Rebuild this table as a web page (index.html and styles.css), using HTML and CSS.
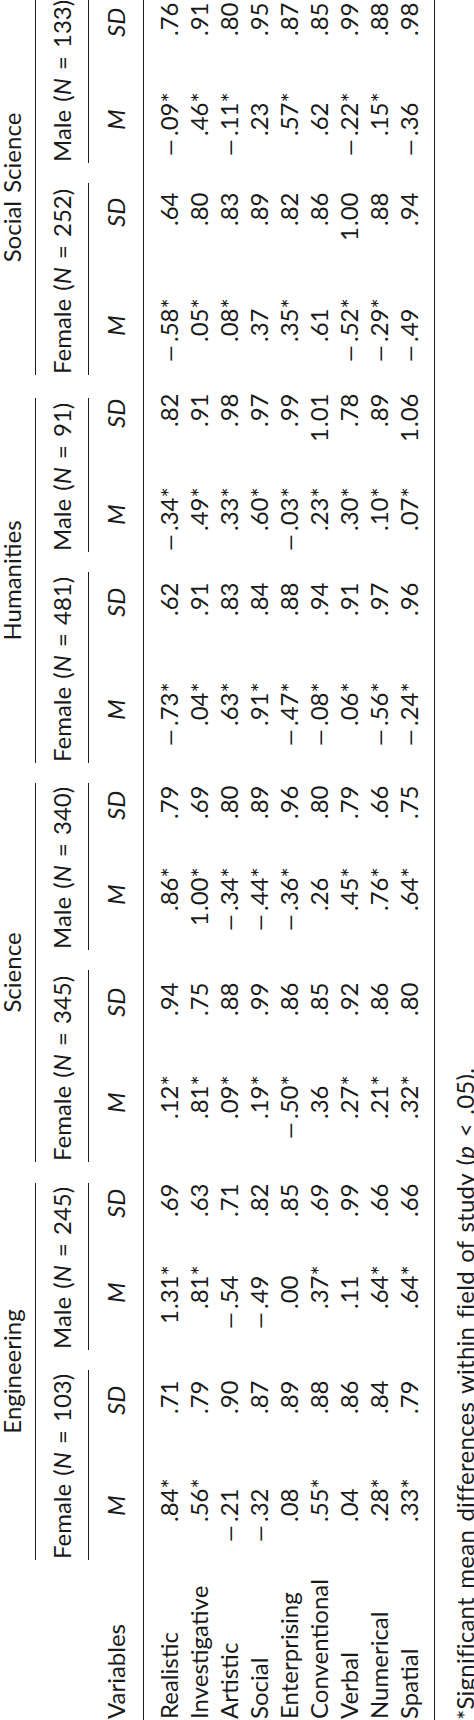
FILE: index.html
```html
<!DOCTYPE html>
<html lang="en">
<head>
<meta charset="utf-8">
<title>Table</title>
<link rel="stylesheet" href="styles.css">
</head>
<body>
<div class="page">
  <div class="sheet">
    <div class="h1">
      <div></div>
      <div class="field f-eng">Engineering</div>
      <div class="field f-sci">Science</div>
      <div class="field f-hum">Humanities</div>
      <div class="field f-ss">Social Science</div>
    </div>
    <div class="h2">
      <div></div>
      <div class="grp g20">Female (<i>N</i> = 103)</div>
      <div class="grp g21">Male (<i>N</i> = 245)</div>
      <div class="grp g20">Female (<i>N</i> = 345)</div>
      <div class="grp g20">Male (<i>N</i> = 340)</div>
      <div class="grp g20">Female (<i>N</i> = 481)</div>
      <div class="grp g23">Male (<i>N</i> = 91)</div>
      <div class="grp g20">Female (<i>N</i> = 252)</div>
      <div class="grp">Male (<i>N</i> = 133)</div>
    </div>
    <div class="h3">
      <div>Variables</div>
      <div><i>M</i></div><div><i>SD</i></div>
      <div><i>M</i></div><div><i>SD</i></div>
      <div><i>M</i></div><div><i>SD</i></div>
      <div><i>M</i></div><div><i>SD</i></div>
      <div><i>M</i></div><div><i>SD</i></div>
      <div><i>M</i></div><div><i>SD</i></div>
      <div><i>M</i></div><div><i>SD</i></div>
      <div><i>M</i></div><div><i>SD</i></div>
    </div>
    <div class="body">
      <div class="row">
        <div>Realistic</div>
        <div><span class="n"></span>.84*</div><div><span class="n"></span>.71</div>
        <div><span class="n">1</span>.31*</div><div><span class="n"></span>.69</div>
        <div><span class="n"></span>.12*</div><div><span class="n"></span>.94</div>
        <div><span class="n"></span>.86*</div><div><span class="n"></span>.79</div>
        <div><span class="n neg">–</span>.73*</div><div><span class="n"></span>.62</div>
        <div><span class="n neg">–</span>.34*</div><div><span class="n"></span>.82</div>
        <div><span class="n neg">–</span>.58*</div><div><span class="n"></span>.64</div>
        <div><span class="n neg">–</span>.09*</div><div><span class="n"></span>.76</div>
      </div>
      <div class="row">
        <div>Investigative</div>
        <div><span class="n"></span>.56*</div><div><span class="n"></span>.79</div>
        <div><span class="n"></span>.81*</div><div><span class="n"></span>.63</div>
        <div><span class="n"></span>.81*</div><div><span class="n"></span>.75</div>
        <div><span class="n">1</span>.00*</div><div><span class="n"></span>.69</div>
        <div><span class="n"></span>.04*</div><div><span class="n"></span>.91</div>
        <div><span class="n"></span>.49*</div><div><span class="n"></span>.91</div>
        <div><span class="n"></span>.05*</div><div><span class="n"></span>.80</div>
        <div><span class="n"></span>.46*</div><div><span class="n"></span>.91</div>
      </div>
      <div class="row">
        <div>Artistic</div>
        <div><span class="n neg">–</span>.21</div><div><span class="n"></span>.90</div>
        <div><span class="n neg">–</span>.54</div><div><span class="n"></span>.71</div>
        <div><span class="n"></span>.09*</div><div><span class="n"></span>.88</div>
        <div><span class="n neg">–</span>.34*</div><div><span class="n"></span>.80</div>
        <div><span class="n"></span>.63*</div><div><span class="n"></span>.83</div>
        <div><span class="n"></span>.33*</div><div><span class="n"></span>.98</div>
        <div><span class="n"></span>.08*</div><div><span class="n"></span>.83</div>
        <div><span class="n neg">–</span>.11*</div><div><span class="n"></span>.80</div>
      </div>
      <div class="row">
        <div>Social</div>
        <div><span class="n neg">–</span>.32</div><div><span class="n"></span>.87</div>
        <div><span class="n neg">–</span>.49</div><div><span class="n"></span>.82</div>
        <div><span class="n"></span>.19*</div><div><span class="n"></span>.99</div>
        <div><span class="n neg">–</span>.44*</div><div><span class="n"></span>.89</div>
        <div><span class="n"></span>.91*</div><div><span class="n"></span>.84</div>
        <div><span class="n"></span>.60*</div><div><span class="n"></span>.97</div>
        <div><span class="n"></span>.37</div><div><span class="n"></span>.89</div>
        <div><span class="n"></span>.23</div><div><span class="n"></span>.95</div>
      </div>
      <div class="row">
        <div>Enterprising</div>
        <div><span class="n"></span>.08</div><div><span class="n"></span>.89</div>
        <div><span class="n"></span>.00</div><div><span class="n"></span>.85</div>
        <div><span class="n neg">–</span>.50*</div><div><span class="n"></span>.86</div>
        <div><span class="n neg">–</span>.36*</div><div><span class="n"></span>.96</div>
        <div><span class="n neg">–</span>.47*</div><div><span class="n"></span>.88</div>
        <div><span class="n neg">–</span>.03*</div><div><span class="n"></span>.99</div>
        <div><span class="n"></span>.35*</div><div><span class="n"></span>.82</div>
        <div><span class="n"></span>.57*</div><div><span class="n"></span>.87</div>
      </div>
      <div class="row">
        <div>Conventional</div>
        <div><span class="n"></span>.55*</div><div><span class="n"></span>.88</div>
        <div><span class="n"></span>.37*</div><div><span class="n"></span>.69</div>
        <div><span class="n"></span>.36</div><div><span class="n"></span>.85</div>
        <div><span class="n"></span>.26</div><div><span class="n"></span>.80</div>
        <div><span class="n neg">–</span>.08*</div><div><span class="n"></span>.94</div>
        <div><span class="n"></span>.23*</div><div><span class="n">1</span>.01</div>
        <div><span class="n"></span>.61</div><div><span class="n"></span>.86</div>
        <div><span class="n"></span>.62</div><div><span class="n"></span>.85</div>
      </div>
      <div class="row">
        <div>Verbal</div>
        <div><span class="n"></span>.04</div><div><span class="n"></span>.86</div>
        <div><span class="n"></span>.11</div><div><span class="n"></span>.99</div>
        <div><span class="n"></span>.27*</div><div><span class="n"></span>.92</div>
        <div><span class="n"></span>.45*</div><div><span class="n"></span>.79</div>
        <div><span class="n"></span>.06*</div><div><span class="n"></span>.91</div>
        <div><span class="n"></span>.30*</div><div><span class="n"></span>.78</div>
        <div><span class="n neg">–</span>.52*</div><div><span class="n">1</span>.00</div>
        <div><span class="n neg">–</span>.22*</div><div><span class="n"></span>.99</div>
      </div>
      <div class="row">
        <div>Numerical</div>
        <div><span class="n"></span>.28*</div><div><span class="n"></span>.84</div>
        <div><span class="n"></span>.64*</div><div><span class="n"></span>.66</div>
        <div><span class="n"></span>.21*</div><div><span class="n"></span>.86</div>
        <div><span class="n"></span>.76*</div><div><span class="n"></span>.66</div>
        <div><span class="n neg">–</span>.56*</div><div><span class="n"></span>.97</div>
        <div><span class="n"></span>.10*</div><div><span class="n"></span>.89</div>
        <div><span class="n neg">–</span>.29*</div><div><span class="n"></span>.88</div>
        <div><span class="n"></span>.15*</div><div><span class="n"></span>.88</div>
      </div>
      <div class="row">
        <div>Spatial</div>
        <div><span class="n"></span>.33*</div><div><span class="n"></span>.79</div>
        <div><span class="n"></span>.64*</div><div><span class="n"></span>.66</div>
        <div><span class="n"></span>.32*</div><div><span class="n"></span>.80</div>
        <div><span class="n"></span>.64*</div><div><span class="n"></span>.75</div>
        <div><span class="n neg">–</span>.24*</div><div><span class="n"></span>.96</div>
        <div><span class="n"></span>.07*</div><div><span class="n">1</span>.06</div>
        <div><span class="n neg">–</span>.49</div><div><span class="n"></span>.94</div>
        <div><span class="n neg">–</span>.36</div><div><span class="n"></span>.98</div>
      </div>
    </div>
    <p class="note">*Significant mean differences within field of study (<i>p</i> &lt; .05).</p>
  </div>
</div>
</body>
</html>
```
FILE: styles.css
```css
:root {
  --cols: 160px 131px 79px 118px 70px 131px 81px 116px 71px 132px 79px 110px 67px 134px 78px 112px 51px;
  --ink: #1a1a1a;
}

* { box-sizing: border-box; }

html, body {
  margin: 0;
  padding: 0;
  background: #fff;
}

.page {
  width: 474px;
  height: 1720px;
  overflow: hidden;
}

.sheet {
  width: 1720px;
  height: 474px;
  transform-origin: 0 0;
  transform: translateY(1720px) rotate(-90deg);
  font-family: "Lato", "Open Sans", sans-serif;
  font-size: 24px;
  word-spacing: 2px;
  color: var(--ink);
}

.sheet i { font-style: italic; }

.h1, .h2, .h3, .row {
  display: grid;
  grid-template-columns: var(--cols);
  line-height: 24px;
  white-space: nowrap;
}

.h1 { height: 36px; }
.h1 > div { height: 36px; }
.field {
  grid-column: span 4;
  text-align: center;
  border-bottom: 1px solid var(--ink);
}
.f-eng { margin-right: 21px; }
.f-sci { margin-right: 20px; }
.f-hum { margin-right: 23px; }

.h2 { height: 53px; }
.h2 > div { height: 53px; }
.grp {
  grid-column: span 2;
  border-bottom: 1px solid var(--ink);
  padding-top: 14px;
  padding-left: 1px;
}
.g20 { margin-right: 20px; }
.g21 { margin-right: 21px; }
.g23 { margin-right: 23px; }

.h3 > div {
  height: 55px;
  padding-top: 15px;
  border-bottom: 1px solid var(--ink);
}
.h3 > div:first-child { padding-left: 1px; }
.h3 > div:nth-child(odd):not(:first-child) { padding-left: 14px; }
.h3 > div:nth-child(2) { padding-left: 44px; }
.h3 > div:nth-child(4) { padding-left: 47px; }
.h3 > div:nth-child(6) { padding-left: 49px; }
.h3 > div:nth-child(8) { padding-left: 45px; }
.h3 > div:nth-child(10) { padding-left: 43px; }
.h3 > div:nth-child(12) { padding-left: 27px; }
.h3 > div:nth-child(14) { padding-left: 39px; }
.h3 > div:nth-child(16) { padding-left: 33px; }

.body {
  padding: 10px 0;
  border-bottom: 1px solid var(--ink);
}

.row {
  height: 30px;
  line-height: 30px;
}
.row > div:first-child { padding-left: 1px; }
.row > div:nth-child(2) { padding-left: 23px; }
.row > div:nth-child(4) { padding-left: 26px; }
.row > div:nth-child(6) { padding-left: 28px; }
.row > div:nth-child(8) { padding-left: 24px; }
.row > div:nth-child(10) { padding-left: 22px; }
.row > div:nth-child(12) { padding-left: 6px; }
.row > div:nth-child(14) { padding-left: 18px; }
.row > div:nth-child(16) { padding-left: 12px; }

.n {
  display: inline-block;
  width: 15px;
  padding-right: 1px;
  text-align: right;
}

.neg {
  transform: scaleX(1.45);
  transform-origin: 100% 50%;
}

.note {
  margin: 18px 0 0;
  line-height: 24px;
  letter-spacing: 0.25px;
  white-space: nowrap;
}
```
